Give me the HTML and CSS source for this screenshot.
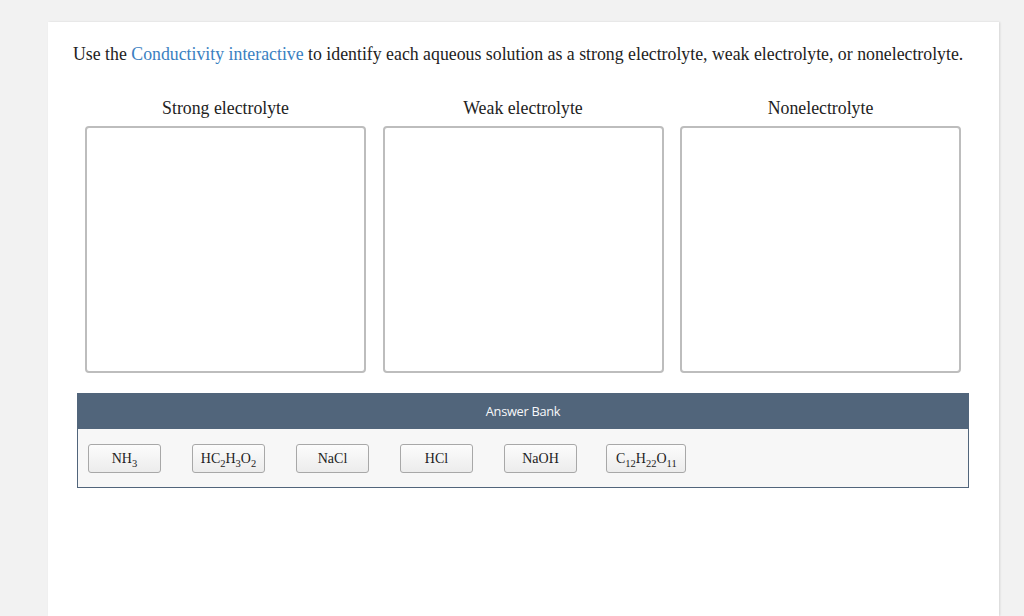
FILE: index.html
```html
<!DOCTYPE html>
<html lang="en">
<head>
<meta charset="utf-8">
<title>Conductivity</title>
<link rel="stylesheet" href="styles.css">
</head>
<body>
<div class="page">
  <div class="card">
    <p class="prompt">Use the <a class="link" href="#">Conductivity interactive</a> to identify each aqueous solution as a strong electrolyte, weak electrolyte, or nonelectrolyte.</p>
    <div class="columns">
      <div class="column">
        <div class="label">Strong electrolyte</div>
        <div class="drop"></div>
      </div>
      <div class="column">
        <div class="label">Weak electrolyte</div>
        <div class="drop"></div>
      </div>
      <div class="column">
        <div class="label">Nonelectrolyte</div>
        <div class="drop"></div>
      </div>
    </div>
    <div class="bank">
      <div class="bank-head">Answer Bank</div>
      <div class="bank-body">
        <div class="chip">NH<sub>3</sub></div>
        <div class="chip">HC<sub>2</sub>H<sub>3</sub>O<sub>2</sub></div>
        <div class="chip">NaCl</div>
        <div class="chip">HCl</div>
        <div class="chip">NaOH</div>
        <div class="chip chip-wide">C<sub>12</sub>H<sub>22</sub>O<sub>11</sub></div>
      </div>
    </div>
  </div>
</div>
</body>
</html>
```

FILE: styles.css
```css
html, body {
  margin: 0;
  padding: 0;
  background: #f2f2f2;
  overflow: hidden;
}

.page {
  padding: 22px 0 0 48px;
  font-family: "Liberation Serif", "Times New Roman", serif;
  color: #222;
}

.card {
  box-sizing: border-box;
  width: 951px;
  height: 594px;
  background: #ffffff;
  box-shadow: 1px 0 2px rgba(0, 0, 0, 0.12);
  padding: 22px 25px 0 25px;
}

.prompt {
  margin: 0;
  font-size: 17.8px;
  line-height: 20px;
  white-space: nowrap;
}

.link {
  color: #3a7fc1;
  text-decoration: none;
}

.columns {
  display: grid;
  grid-template-columns: 281px 281px 281px;
  column-gap: 16.5px;
  margin: 34px 0 0 12px;
}

.column {
  display: flex;
  flex-direction: column;
}

.label {
  text-align: center;
  font-size: 17.8px;
  line-height: 20px;
  margin-bottom: 8px;
}

.drop {
  box-sizing: border-box;
  height: 247px;
  border: 2px solid #bdbdbd;
  border-radius: 4px;
  background: #fff;
}

.bank {
  width: 892px;
  margin: 20px 0 0 4px;
}

.bank-head {
  height: 36px;
  background: #51657b;
  color: #f7f8fa;
  font-family: "Open Sans", "Noto Sans", sans-serif;
  font-size: 12.8px;
  font-weight: 500;
  line-height: 36px;
  text-align: center;
  letter-spacing: -0.3px;
}

.bank-body {
  box-sizing: border-box;
  display: flex;
  gap: 31px;
  padding: 15px 10px 14px 10px;
  background: #f7f7f7;
  border: 1px solid #51657b;
  border-top: none;
}

.chip {
  box-sizing: border-box;
  min-width: 73px;
  height: 29px;
  padding: 0 6px;
  border: 1px solid #a8a8a8;
  border-radius: 3px;
  background: linear-gradient(#fcfcfc, #ececec);
  font-size: 14px;
  line-height: 27px;
  text-align: center;
  color: #222;
}

.chip-wide {
  margin-left: -2px;
  padding: 0 8px 0 9px;
}

.chip sub {
  font-size: 10.5px;
  vertical-align: -4px;
  line-height: 0;
}
```
